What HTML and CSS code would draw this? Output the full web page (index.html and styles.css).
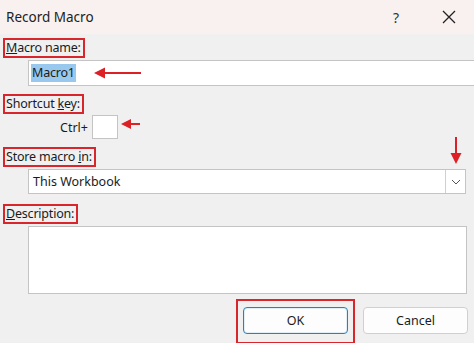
FILE: index.html
```html
<!DOCTYPE html>
<html lang="en">
<head>
  <meta charset="UTF-8">
  <title>Record Macro</title>
  <link rel="stylesheet" href="styles.css">
</head>
<body>
  <div class="dialog">
    <header class="titlebar">
      <span class="title">Record Macro</span>
      <div class="title-btns">
        <span class="help">?</span>
        <svg class="close" width="14" height="14" viewBox="0 0 14 14">
          <path d="M1 1 L13 13 M13 1 L1 13" stroke="#222" stroke-width="1.3" fill="none"/>
        </svg>
      </div>
    </header>

    <div class="content">
      <div class="row label-row first">
        <span class="label boxed"><u>M</u>acro name:</span>
      </div>
      <div class="field name-field">
        <span class="selected">Macro1</span>
        <svg class="arrow arrow-name" width="48" height="12" viewBox="0 0 48 12">
          <path d="M10 6 H47" stroke="#dd1f26" stroke-width="2"/>
          <path d="M0 6 L11 0.5 L11 11.5 Z" fill="#dd1f26"/>
        </svg>
      </div>

      <div class="row label-row">
        <span class="label boxed">Shortcut <u>k</u>ey:</span>
      </div>
      <div class="shortcut-row">
        <span class="ctrl">Ctrl+</span>
        <span class="keybox"></span>
        <svg class="arrow" width="19" height="12" viewBox="0 0 19 12">
          <path d="M8 6 H19" stroke="#dd1f26" stroke-width="2"/>
          <path d="M0 6 L10 1 L10 11 Z" fill="#dd1f26"/>
        </svg>
      </div>

      <div class="row label-row store-row">
        <span class="label boxed">Store macro <u>i</u>n:</span>
        <svg class="arrow arrow-down" width="12" height="28" viewBox="0 0 12 28">
          <path d="M6 0 V18" stroke="#dd1f26" stroke-width="2"/>
          <path d="M0.5 16 L11.5 16 L6 27 Z" fill="#dd1f26"/>
        </svg>
      </div>
      <div class="field select-field">
        <span class="select-text">This Workbook</span>
        <span class="drop-btn">
          <svg width="10" height="6" viewBox="0 0 10 6">
            <path d="M1 1 L5 5 L9 1" stroke="#555" stroke-width="1" fill="none"/>
          </svg>
        </span>
      </div>

      <div class="row label-row">
        <span class="label boxed"><u>D</u>escription:</span>
      </div>
      <div class="field desc-field"></div>

      <div class="buttons">
        <div class="ok-wrap">
          <button class="btn btn-ok">OK</button>
        </div>
        <button class="btn btn-cancel">Cancel</button>
      </div>
    </div>
  </div>
</body>
</html>
```

FILE: styles.css
```css
body {
  margin: 0;
  background-color: #f0f0f0;
  font-family: 'Noto Sans', 'Open Sans', sans-serif;
  color: #1b1b1b;
  overflow: hidden;
}
.dialog {
  width: 474px;
  height: 343px;
  overflow: hidden;
}
.titlebar {
  height: 34px;
  background-color: #f9f1ef;
  display: flex;
  align-items: center;
  justify-content: space-between;
  padding: 0 18px 0 6px;
}
.title {
  font-size: 13.5px;
  color: #222;
}
.title-btns {
  display: flex;
  align-items: center;
  gap: 43px;
}
.help {
  font-size: 14px;
  color: #333;
}
.content {
  padding: 4px 5px 0 3px;
}
.label-row {
  display: flex;
  align-items: flex-end;
}
.label {
  font-size: 12.5px;
  line-height: 16px;
  letter-spacing: -0.2px;
  padding: 0 2px 0 1px;
}
.boxed {
  border: 2px solid #d8262c;
}
.field {
  background-color: #fff;
  border: 1px solid #c4c4c4;
  margin-left: 25px;
  box-sizing: border-box;
  font-size: 12.5px;
}
.name-field {
  margin-top: 1px;
  margin-right: -10px;
  height: 26px;
  display: flex;
  align-items: center;
  padding-left: 2px;
  position: relative;
}
.selected {
  background-color: #99c8ee;
  line-height: 18px;
  padding: 0 1px;
  letter-spacing: -0.2px;
}
.arrow-name {
  margin-left: 18px;
}
.label-row + .field {
  margin-top: 2px;
}
.name-field + .label-row {
  margin-top: 8px;
}
.shortcut-row {
  display: flex;
  align-items: center;
  height: 24px;
  margin-top: 1px;
  padding-left: 57px;
  font-size: 12.5px;
}
.ctrl {
  margin-right: 4px;
}
.keybox {
  width: 24px;
  height: 22px;
  background-color: #fff;
  border: 1px solid #c4c4c4;
  margin-right: 3px;
}
.shortcut-row .arrow {
  margin-bottom: 7px;
}
.store-row {
  margin-top: 8px;
  position: relative;
}
.arrow-down {
  position: absolute;
  left: 447px;
  top: -10px;
}
.select-field {
  height: 25px;
  margin-right: 3px;
  display: flex;
  align-items: center;
  justify-content: space-between;
  padding-left: 4px;
}
.drop-btn {
  width: 19px;
  height: 23px;
  border-left: 1px solid #d0d0d0;
  display: flex;
  align-items: center;
  justify-content: center;
}
.select-field + .label-row {
  margin-top: 10px;
}
.desc-field {
  height: 68px;
  margin-right: 2px;
}
.buttons {
  display: flex;
  justify-content: flex-end;
  align-items: flex-start;
  margin-top: 5px;
  margin-right: 1px;
  gap: 8px;
}
.ok-wrap {
  border: 2px solid #d8262c;
  padding: 6px 5px 8px 5px;
}
.btn {
  width: 105px;
  height: 27px;
  font-family: 'Noto Sans', 'Open Sans', sans-serif;
  font-size: 12.5px;
  color: #1b1b1b;
  background-color: #fdfdfd;
  border: 1px solid #d0d0d0;
  border-radius: 4px;
  padding: 0;
}
.btn-ok {
  border: 1px solid #2f7fb5;
  box-shadow: inset 0 0 0 1px #e2eef6;
}
.btn-cancel {
  margin-top: 8px;
}
```
